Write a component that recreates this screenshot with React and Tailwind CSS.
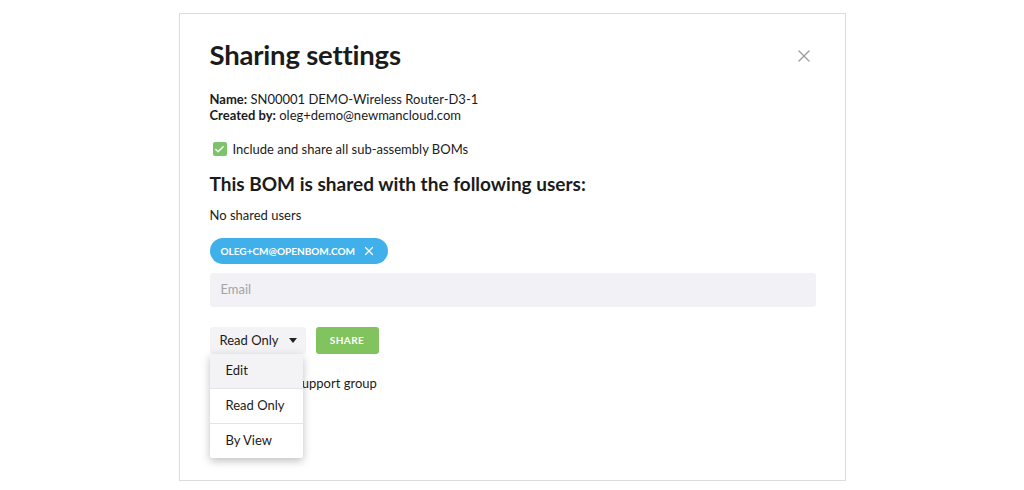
import { Check, X } from "lucide-react";

const App = () => {
  return (
    <div className="bg-white w-[1024px] h-[490px] pt-[13px] font-['Lato',sans-serif] text-[#1b1b1b]">
      <div className="relative mx-auto w-[667px] h-[468px] border border-[#dcdcdc] pl-[30px] pr-[30px] pt-[24px]">
        <button className="absolute right-[31px] top-[32px] text-[#a0a0a0]">
          <X size={20} strokeWidth={1.6} />
        </button>
        <h1 className="text-[27.5px] font-bold leading-[34px] tracking-[-0.2px]">Sharing settings</h1>

        <div className="mt-[19px] text-[13px] leading-[16px]">
          <p>
            <span className="font-bold">Name:</span> SN00001 DEMO-Wireless Router-D3-1
          </p>
          <p>
            <span className="font-bold">Created by:</span> oleg+demo@newmancloud.com
          </p>
        </div>

        <label className="mt-[18px] flex items-center gap-[6px] text-[13px] leading-[16px]">
          <span className="ml-[3px] flex h-[14px] w-[14px] items-center justify-center rounded-[2px] bg-[#7dc36b] text-white">
            <Check size={11} strokeWidth={3} />
          </span>
          Include and share all sub-assembly BOMs
        </label>

        <h2 className="mt-[15px] text-[19px] font-bold leading-[24px]">This BOM is shared with the following users:</h2>
        <p className="mt-[11px] text-[13px] leading-[16px]">No shared users</p>

        <div className="mt-[15px] inline-flex h-[26px] items-center gap-[7px] rounded-full bg-[#3fb0ea] pl-[11px] pr-[12px] text-[10px] font-bold text-white">
          OLEG+CM@OPENBOM.COM
          <X size={14} strokeWidth={2.2} />
        </div>

        <div className="mt-[9px] flex h-[34px] w-[606px] items-center rounded-[3px] bg-[#f2f2f6] pl-[11px] text-[13px] text-[#a3a3a8]">
          Email
        </div>

        <div className="relative mt-[20px] flex items-center gap-[10px]">
          <div className="flex h-[27px] w-[96px] items-center justify-between rounded-[3px] bg-[#f3f3f6] pl-[10px] pr-[9px] text-[13px]">
            Read Only
            <span className="h-0 w-0 border-l-[4px] border-r-[4px] border-t-[5px] border-l-transparent border-r-transparent border-t-[#222]"></span>
          </div>
          <button className="h-[27px] w-[63px] rounded-[3px] bg-[#80c35f] text-[10px] font-bold tracking-[0.4px] text-white">
            SHARE
          </button>

          <div className="absolute left-0 top-[27px] z-10 w-[93px] rounded-[2px] bg-white text-[13px] shadow-[0_3px_8px_rgba(0,0,0,0.25)]">
            <div className="flex h-[34px] items-center bg-[#f3f3f6] pl-[16px]">Edit</div>
            <div className="flex h-[35px] items-center border-t border-[#e4e4e8] pl-[16px]">Read Only</div>
            <div className="flex h-[35px] items-center border-t border-[#e4e4e8] pl-[16px]">By View</div>
          </div>
        </div>

        <label className="mt-[21px] flex items-center gap-[6px] text-[13px] leading-[16px]">
          <span className="ml-[3px] h-[14px] w-[14px] rounded-[2px] border border-[#999]"></span>
          Share with support group
        </label>
      </div>
    </div>
  );
};

export default App;
